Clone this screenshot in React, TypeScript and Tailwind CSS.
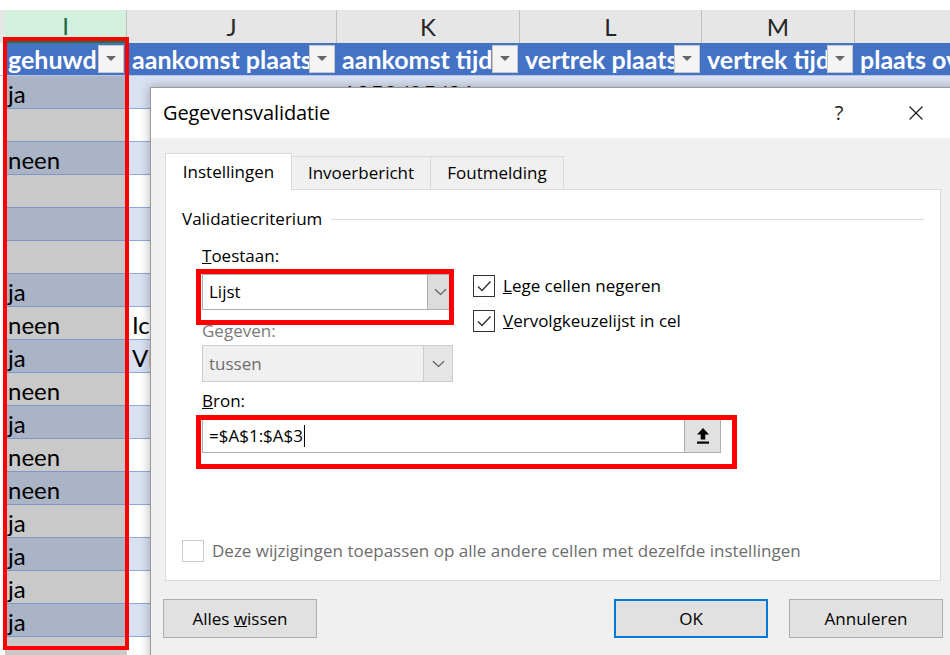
import { X } from 'lucide-react'

const colI = ['ja', '', 'neen', '', '', '', 'ja', 'neen', 'ja', 'neen', 'ja', 'neen', 'neen', 'ja', 'ja', 'ja', 'ja', '']
const colJ: Record<number, string> = { 7: 'Ichtegem', 8: 'Vlamertinge' }
const colK: Record<number, string> = { 0: '1850/05/21' }

function FilterButton() {
  return (
    <div className="w-[26px] h-[28px] shrink-0 bg-[#f4f4f4] border border-[#c6c6c6] flex items-center justify-center">
      <svg width="10" height="6" viewBox="0 0 10 6">
        <path d="M0 0 L10 0 L5 5 Z" fill="#666" />
      </svg>
    </div>
  )
}

function Chevron() {
  return (
    <svg width="13" height="8" viewBox="0 0 13 8" fill="none">
      <path d="M1 1.2 L6.5 6.5 L12 1.2" stroke="#5f5f5f" strokeWidth="1.2" />
    </svg>
  )
}

function CheckBox({ checked, disabled }: { checked?: boolean; disabled?: boolean }) {
  return (
    <div
      className={`w-[22px] h-[22px] shrink-0 bg-white border flex items-center justify-center ${
        disabled ? 'border-[#cccccc]' : 'border-[#333333]'
      }`}
    >
      {checked && (
        <svg width="16" height="14" viewBox="0 0 16 14" fill="none">
          <path d="M2 7.5 L6 11.5 L14.5 2.5" stroke="#333" strokeWidth="1.4" />
        </svg>
      )}
    </div>
  )
}

export default function App() {
  return (
    <div className="relative w-[950px] h-[655px] overflow-hidden bg-white font-['Lato',sans-serif] text-black">
      {/* sheet */}
      <div className="h-[10px] bg-white" />
      <div className="flex h-[33px] bg-[#e6e6e6] text-[24px] text-[#262626]">
        <div className="w-[5px] shrink-0" />
        <div className="w-[122px] shrink-0 bg-[#d3f0de] border-r border-[#c0c0c0] border-b-2 border-b-[#217346] flex items-center justify-center text-[#1e6b41]">I</div>
        <div className="w-[210px] shrink-0 border-r border-[#c0c0c0] flex items-center justify-center">J</div>
        <div className="w-[183px] shrink-0 border-r border-[#c0c0c0] flex items-center justify-center">K</div>
        <div className="w-[182px] shrink-0 border-r border-[#c0c0c0] flex items-center justify-center">L</div>
        <div className="w-[153px] shrink-0 border-r border-[#c0c0c0] flex items-center justify-center">M</div>
        <div className="flex-1" />
      </div>
      <div className="flex h-[33px] bg-[#4472c4] text-white text-[25px] font-bold border-b border-[#b4c6e7]">
        <div className="w-[5px] shrink-0 bg-white" />
        <div className="w-[122px] shrink-0 flex items-center pl-[3px] pr-[3px]">
          <span className="flex-1 overflow-hidden whitespace-nowrap pt-[2px]">gehuwd</span>
          <FilterButton />
        </div>
        <div className="w-[210px] shrink-0 flex items-center pl-[5px] pr-[2px]">
          <span className="flex-1 overflow-hidden whitespace-nowrap pt-[2px]">aankomst plaats</span>
          <FilterButton />
        </div>
        <div className="w-[183px] shrink-0 flex items-center pl-[5px] pr-[2px]">
          <span className="flex-1 overflow-hidden whitespace-nowrap pt-[2px]">aankomst tijd</span>
          <FilterButton />
        </div>
        <div className="w-[182px] shrink-0 flex items-center pl-[5px] pr-[2px]">
          <span className="flex-1 overflow-hidden whitespace-nowrap pt-[2px]">vertrek plaats</span>
          <FilterButton />
        </div>
        <div className="w-[153px] shrink-0 flex items-center pl-[5px] pr-[2px]">
          <span className="flex-1 overflow-hidden whitespace-nowrap pt-[2px]">vertrek tijd</span>
          <FilterButton />
        </div>
        <div className="flex-1 min-w-0 flex items-center pl-[5px] overflow-hidden whitespace-nowrap pt-[2px]">plaats ov</div>
      </div>
      {colI.map((v, i) => {
        const band = i % 2 === 0
        return (
          <div key={i} className="flex h-[33px] text-[24px]">
            <div className="w-[5px] shrink-0 bg-white" />
            <div className={`w-[122px] shrink-0 border-b border-[#7f97c4] flex items-center pl-[3px] pt-[3px] ${band ? 'bg-[#abb4c6]' : 'bg-[#c9c9c9]'}`}>{v}</div>
            <div className={`w-[210px] shrink-0 border-b border-[#8ea9db] flex items-center pl-[5px] pt-[3px] whitespace-nowrap ${band ? 'bg-[#d9e1f2]' : 'bg-white'}`}>{colJ[i] ?? ''}</div>
            <div className={`w-[183px] shrink-0 border-b border-[#8ea9db] flex items-center pl-[5px] pt-[3px] whitespace-nowrap ${band ? 'bg-[#d9e1f2]' : 'bg-white'}`}>{colK[i] ?? ''}</div>
            <div className={`flex-1 border-b border-[#8ea9db] ${band ? 'bg-[#d9e1f2]' : 'bg-white'}`} />
          </div>
        )
      })}

      {/* dialog */}
      <div className="absolute left-[150px] top-[87px] w-[806px] h-[600px] bg-[#f0f0f0] border border-[#9a9a9a] shadow-[0_0_10px_rgba(0,0,0,0.3)] flex flex-col font-['Open_Sans',sans-serif] text-black">
        <div className="h-[50px] shrink-0 bg-white flex items-center pl-[12px] pr-[16px]">
          <span className="text-[20px] flex-1 tracking-[-0.1px]">Gegevensvalidatie</span>
          <span className="w-[46px] text-center text-[20px] text-[#222]">?</span>
          <div className="w-[46px] ml-[31px] flex items-center justify-center">
            <X size={24} strokeWidth={1.3} color="#222" />
          </div>
        </div>

        <div className="px-[14px] pt-[14px] text-[17px]">
          <div className="flex items-end h-[37px]">
            <div className="w-[127px] h-[37px] bg-white border border-[#d9d9d9] border-b-0 relative z-10 -mb-px flex items-center justify-center">
              Instellingen
            </div>
            <div className="w-[139px] h-[33px] bg-[#f0f0f0] border border-[#d9d9d9] border-l-0 border-b-0 flex items-center justify-center">
              Invoerbericht
            </div>
            <div className="w-[133px] h-[33px] bg-[#f0f0f0] border border-[#d9d9d9] border-l-0 border-b-0 flex items-center justify-center">
              Foutmelding
            </div>
          </div>

          <div className="h-[392px] bg-white border border-[#d9d9d9] flex flex-col pl-[16px]">
            <div className="mt-[18px] h-[22px] flex items-center gap-[9px] pr-[16px]">
              <span>Validatiecriterium</span>
              <div className="flex-1 h-px bg-[#dcdcdc]" />
            </div>

            <div className="flex pl-[20px] mt-[15px]">
              <div className="flex flex-col w-[251px]">
                <div className="h-[22px] leading-[22px]">
                  <span className="underline">T</span>oestaan:
                </div>
                <div className="mt-[7px] h-[36px] flex bg-white border border-[#adadad]">
                  <div className="flex-1 flex items-center pl-[6px]">Lijst</div>
                  <div className="w-[25px] bg-[#dcdcdc] border-l border-[#adadad] flex items-center justify-center">
                    <Chevron />
                  </div>
                </div>
                <div className="mt-[10px] h-[22px] leading-[22px] text-[#7a7a7a]">Gegeven:</div>
                <div className="mt-[3px] h-[37px] flex bg-[#f0f0f0] border border-[#cccccc]">
                  <div className="flex-1 flex items-center pl-[6px] text-[#6d6d6d]">tussen</div>
                  <div className="w-[29px] bg-[#e5e5e5] border-l border-[#cccccc] flex items-center justify-center">
                    <Chevron />
                  </div>
                </div>
              </div>
              <div className="ml-[20px] pt-[30px] flex flex-col gap-[13px]">
                <div className="h-[22px] flex items-center gap-[8px]">
                  <CheckBox checked />
                  <span>
                    <span className="underline">L</span>ege cellen negeren
                  </span>
                </div>
                <div className="h-[22px] flex items-center gap-[8px]">
                  <CheckBox checked />
                  <span>
                    <span className="underline">V</span>ervolgkeuzelijst in cel
                  </span>
                </div>
              </div>
            </div>

            <div className="pl-[20px] mt-[8px] h-[22px] leading-[22px]">
              <span className="underline">B</span>ron:
            </div>
            <div className="ml-[20px] mt-[7px] w-[519px] h-[34px] flex bg-white border border-[#adadad]">
              <div className="flex-1 flex items-center pl-[6px]">
                <span>=$A$1:$A$3</span>
                <span className="w-px h-[22px] bg-black ml-px" />
              </div>
              <div className="w-[36px] bg-[#e1e1e1] border-l border-[#adadad] flex items-center justify-center">
                <svg width="12" height="16" viewBox="0 0 12 16">
                  <path d="M6 0 L12 6.5 L8.3 6.5 L8.3 11.5 L3.7 11.5 L3.7 6.5 L0 6.5 Z" fill="#000" />
                  <rect x="0" y="13.5" width="12" height="2.2" fill="#000" />
                </svg>
              </div>
            </div>

            <div className="mt-auto mb-[18px] h-[22px] flex items-center gap-[8px] text-[#6d6d6d]">
              <CheckBox disabled />
              <span>Deze wijzigingen toepassen op alle andere cellen met dezelfde instellingen</span>
            </div>
          </div>
        </div>

        <div className="flex justify-between px-[12px] mt-[18px] text-[17px]">
          <button className="w-[154px] h-[39px] bg-[#e1e1e1] border border-[#adadad]">
            Alles <span className="underline">w</span>issen
          </button>
          <div className="flex gap-[21px]">
            <button className="w-[154px] h-[39px] bg-[#e1e1e1] border-2 border-[#0078d7]">OK</button>
            <button className="w-[154px] h-[39px] bg-[#e1e1e1] border border-[#adadad]">Annuleren</button>
          </div>
        </div>
      </div>

      {/* red annotation frames */}
      <div className="absolute left-[3px] top-[37px] w-[126px] h-[613px] border-[4px] border-[#ff0000]" />
      <div className="absolute left-[196px] top-[269px] w-[258px] h-[56px] border-[5px] border-[#ff0000]" />
      <div className="absolute left-[196px] top-[415px] w-[541px] h-[54px] border-[5px] border-[#ff0000]" />
    </div>
  )
}
